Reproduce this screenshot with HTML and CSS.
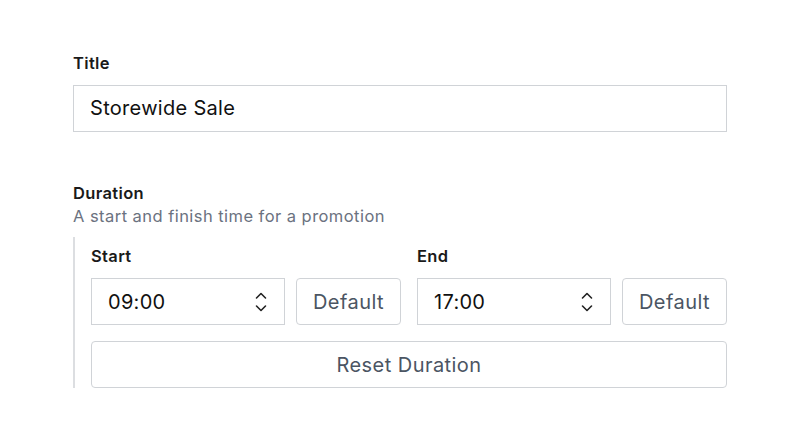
FILE: index.html
```html
<!DOCTYPE html>
<html>
<head>
<meta charset="utf-8">
<link rel="stylesheet" href="styles.css">
</head>
<body>
<div class="form">
  <div class="field">
    <label class="label">Title</label>
    <div class="input">Storewide Sale</div>
  </div>
  <div class="group">
    <div class="label">Duration</div>
    <div class="desc">A start and finish time for a promotion</div>
    <div class="fieldset">
      <div class="row">
        <div class="col">
          <div class="label">Start</div>
          <div class="controls">
            <div class="select"><span>09:00</span>
              <svg class="chev" width="12" height="22" viewBox="0 0 12 22"><path d="M1.5 7 L6 2.5 L10.5 7 M1.5 15 L6 19.5 L10.5 15" fill="none" stroke="#222" stroke-width="1.6" stroke-linecap="round" stroke-linejoin="round"/></svg>
            </div>
            <div class="btn">Default</div>
          </div>
        </div>
        <div class="col">
          <div class="label">End</div>
          <div class="controls">
            <div class="select"><span>17:00</span>
              <svg class="chev" width="12" height="22" viewBox="0 0 12 22"><path d="M1.5 7 L6 2.5 L10.5 7 M1.5 15 L6 19.5 L10.5 15" fill="none" stroke="#222" stroke-width="1.6" stroke-linecap="round" stroke-linejoin="round"/></svg>
            </div>
            <div class="btn">Default</div>
          </div>
        </div>
      </div>
      <div class="btn reset">Reset Duration</div>
    </div>
  </div>
</div>
</body>
</html>
```

FILE: styles.css
```css
html, body { margin: 0; padding: 0; background: #fff; }
body {
  font-family: Inter, "Liberation Sans", sans-serif;
  color: #1d1d1f;
}
.form {
  width: 654px;
  margin-left: 73px;
  padding-top: 52px;
}
.label {
  display: block;
  font-size: 16.5px;
  font-weight: 600;
  line-height: 22px;
  letter-spacing: 0.35px;
  color: #1a1a1a;
}
.field .label { margin-bottom: 11px; }
.input {
  box-sizing: border-box;
  height: 47px;
  border: 1px solid #d0d3d7;
  padding: 0 16px;
  font-size: 20px;
  letter-spacing: 0.3px;
  line-height: 45px;
  color: #111;
}
.group { margin-top: 50px; }
.desc {
  font-size: 16.5px;
  line-height: 22px;
  letter-spacing: 0.45px;
  color: #6b7280;
  margin-top: 1px;
}
.fieldset {
  margin-top: 10px;
  border-left: 2px solid #dcdee1;
  padding: 8px 0 0 16px;
}
.row {
  display: flex;
  gap: 16px;
}
.col { flex: 1; }
.col .label { margin-bottom: 11px; }
.controls {
  display: flex;
  gap: 11px;
}
.select {
  flex: 1;
  box-sizing: border-box;
  height: 47px;
  border: 1px solid #d0d3d7;
  display: flex;
  align-items: center;
  justify-content: space-between;
  padding: 0 17px 0 16px;
  font-size: 20px;
  letter-spacing: 0.3px;
  color: #111;
}
.chev { display: block; }
.btn {
  box-sizing: border-box;
  height: 47px;
  border: 1px solid #d0d3d7;
  border-radius: 4px;
  display: flex;
  align-items: center;
  justify-content: center;
  padding: 0 12px;
  font-size: 20px;
  letter-spacing: 0.45px;
  color: #4b5563;
  width: 105px;
}
.reset {
  width: auto;
  margin-top: 16px;
}
```
